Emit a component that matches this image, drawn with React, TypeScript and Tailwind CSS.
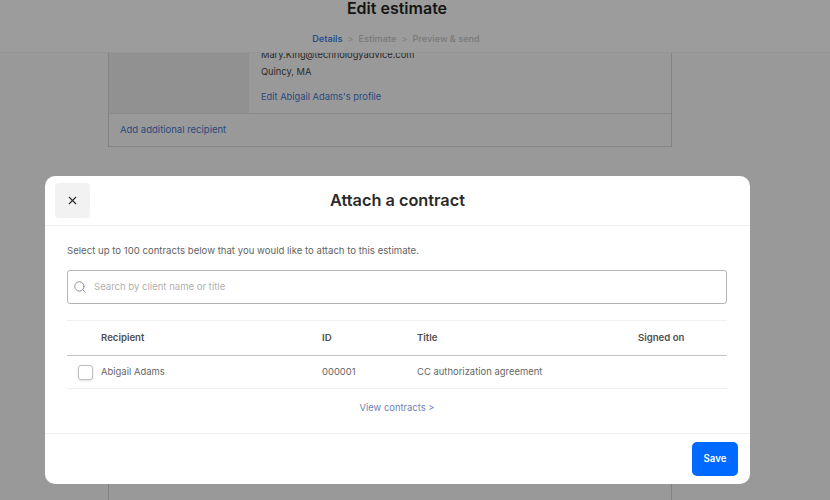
import { Search, X } from 'lucide-react';

export default function App() {
  return (
    <div className="relative h-[500px] w-[830px] overflow-hidden bg-[#999999] font-['Inter',sans-serif]">
      {/* page behind the modal */}
      <div className="h-[53px] border-b border-[#959595] bg-[#9c9c9c] pr-[36px] text-center">
        <div className="text-[16px] leading-[16px] font-semibold text-[#141414]">Edit estimate</div>
        <div className="mt-[17px] flex justify-center gap-[5px] pr-[2px] text-[9.1px] leading-3 font-semibold text-[#7d7d7d]">
          <span className="text-[#2a4f8f]">Details</span>
          <span className="font-normal">&gt;</span>
          <span>Estimate</span>
          <span className="font-normal">&gt;</span>
          <span>Preview &amp; send</span>
        </div>
      </div>
      <div className="ml-[108px] h-[94px] w-[564px] overflow-hidden border-x border-b border-[#838383]">
        <div className="flex h-[61px] border-b border-[#8a8a8a]">
          <div className="w-[140px] bg-[#919191]" />
          <div className="-mt-[6px] pl-[12px] text-[9.3px] text-[#2b2b2b]">
            <div className="leading-4">Mary.King@technologyadvice.com</div>
            <div className="mt-[1px] leading-4">Quincy, MA</div>
            <div className="mt-[9px] leading-4 text-[#2a4a7d]">Edit Abigail Adams's profile</div>
          </div>
        </div>
        <div className="pl-[11px] pt-[8px] text-[9.5px] leading-4 text-[#2a4a7d]">Add additional recipient</div>
      </div>
      <div className="ml-[108px] mt-[324px] h-[40px] w-[564px] border-x border-[#838383]" />

      {/* modal */}
      <div className="absolute left-[45px] top-[176px] flex h-[308px] w-[705px] flex-col rounded-[10px] bg-white">
        <div className="relative flex h-[50px] items-center justify-center border-b border-[#f0f0f0]">
          <button className="absolute left-[10px] top-[7px] flex h-[35px] w-[35px] items-center justify-center rounded bg-[#f2f2f2] text-[#2a2a2a]">
            <X size={13} strokeWidth={2} />
          </button>
          <h2 className="text-[16.3px] font-semibold text-[#2a2a2a]">Attach a contract</h2>
        </div>
        <div className="flex-1 pl-[22px] pr-[23px]">
          <p className="mt-[19px] text-[9.6px] leading-3 text-[#636363]">
            Select up to 100 contracts below that you would like to attach to this estimate.
          </p>
          <div className="mt-[13px] flex h-[34px] items-center gap-[7px] rounded-[3px] border border-[#b5b5b5] pl-[5px]">
            <Search size={14} strokeWidth={1.6} className="text-[#8a8a8a]" />
            <span className="text-[9.55px] text-[#b0b0b0]">Search by client name or title</span>
          </div>
          <div className="mt-[16px] flex h-[36px] items-center border-y border-t-[#f0f0f0] border-b-[#c4c4c4] text-[9.6px] font-semibold text-[#505050]">
            <div className="w-[255px] pl-[34px]">Recipient</div>
            <div className="w-[95px]">ID</div>
            <div className="w-[221px]">Title</div>
            <div>Signed on</div>
          </div>
          <div className="flex h-[33px] items-center border-b border-[#f0f0f0] text-[9.45px] text-[#666666]">
            <div className="flex w-[255px] items-center">
              <span className="ml-[11px] h-[15px] w-[15px] rounded-[3px] border border-[#bdbdbd] shadow-sm" />
              <span className="ml-[8px]">Abigail Adams</span>
            </div>
            <div className="w-[95px]">000001</div>
            <div>CC authorization agreement</div>
          </div>
          <div className="pt-[11px] text-center text-[9.4px] leading-4 text-[#6a84b4]">View contracts &gt;</div>
        </div>
        <div className="flex h-[51px] items-start justify-end border-t border-[#f0f0f0] pr-[12px] pt-[8px]">
          <button className="flex h-[34px] w-[46px] items-center justify-center rounded-[5px] bg-[#0069ff] text-[9.7px] font-semibold text-white">
            Save
          </button>
        </div>
      </div>
    </div>
  );
}
